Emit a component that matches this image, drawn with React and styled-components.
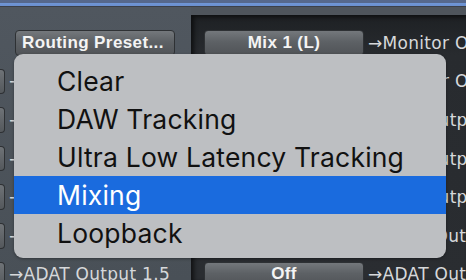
import React from "react";
import styled, { createGlobalStyle } from "styled-components";

const GlobalStyle = createGlobalStyle`
  html, body { margin: 0; padding: 0; background: #4c5259; }
  * { box-sizing: border-box; }
`;

const Screen = styled.div`
  position: relative;
  width: 466px;
  height: 280px;
  overflow: hidden;
  background: #4f555c;
  font-family: "Liberation Sans", Arial, sans-serif;
`;

const TopBar = styled.div`
  height: 7px;
  background: linear-gradient(#56688c 0, #56688c 3px, #7096d6 3px, #6a8fce 6px, #3c4048 6px);
`;

const Body = styled.div`
  display: flex;
  height: 273px;
`;

const LeftPanel = styled.div`
  width: 191px;
  flex-shrink: 0;
  overflow: hidden;
  padding-top: 23px;
  background: linear-gradient(#50575f, #495057);
`;

const RightPanel = styled.div`
  flex: 1;
  min-width: 0;
  overflow: hidden;
  margin-top: 8px;
  padding-top: 15px;
  background: linear-gradient(#1e2124, #282b2f 40px, #2a2d31);
  box-shadow: inset 3px 2px 4px rgba(0, 0, 0, 0.6);
`;

const Rows = styled.div`
  display: flex;
  flex-direction: column;
  gap: 13px;
`;

const Row = styled.div`
  display: flex;
  align-items: center;
  height: 25.6px;
  padding-left: ${(p) => p.$indent || 0}px;
  white-space: nowrap;
`;

const Button = styled.div`
  width: ${(p) => p.$w}px;
  height: 100%;
  flex-shrink: 0;
  display: flex;
  align-items: center;
  justify-content: ${(p) => (p.$left ? "flex-start" : "center")};
  padding-left: ${(p) => (p.$left ? 6 : 0)}px;
  border-radius: 4px;
  border: 1px solid #2e3134;
  background: linear-gradient(#74787c, #5d6165 45%, #505357);
  color: #f4f4f4;
  font-weight: bold;
  font-size: 17px;
  letter-spacing: 0.4px;
`;

const Stub = styled.div`
  width: 5px;
  height: 100%;
  flex-shrink: 0;
  border-radius: 0 4px 4px 0;
  border: 1px solid #2e3134;
  border-left: none;
  background: linear-gradient(#6f7377, #54585c);
`;

const Label = styled.span`
  margin-left: ${(p) => p.$gap || 4}px;
  color: #d6d8da;
  font-family: "DejaVu Sans", sans-serif;
  font-size: 17px;
  letter-spacing: 0.3px;
`;

const Menu = styled.div`
  position: absolute;
  left: 14px;
  top: 54px;
  width: 432px;
  padding: 8px 0 6px;
  border-radius: 9px;
  background: #bdbfc2;
  box-shadow: 0 1px 3px rgba(0, 0, 0, 0.35);
  overflow: hidden;
`;

const Item = styled.div`
  height: 38px;
  display: flex;
  align-items: center;
  padding-left: 43px;
  font-family: Inter, "Noto Sans", sans-serif;
  font-size: 26.5px;
  letter-spacing: 0.2px;
  color: ${(p) => (p.$active ? "#ffffff" : "#111111")};
  background: ${(p) => (p.$active ? "#1a6bde" : "transparent")};
`;

const leftRows = [
  null,
  "→Analog Output 1.2",
  "→Analog Output 3.4",
  "→Analog Output 5.6",
  "→ADAT Output 1.2",
  "→ADAT Output 3.4",
  "→ADAT Output 1.5",
];

const rightRows = [
  ["Mix 1 (L)", "→Monitor Output"],
  ["Mix 1 (R)", "→Monitor Output"],
  ["Off", "→Line Output 1"],
  ["Off", "→Line Output 2"],
  ["Off", "→Line Output 3"],
  ["Off", "→ADAT Output 1"],
  ["Off", "→ADAT Output 2"],
];

const items = ["Clear", "DAW Tracking", "Ultra Low Latency Tracking", "Mixing", "Loopback"];

export default function App() {
  return (
    <Screen>
      <GlobalStyle />
      <TopBar />
      <Body>
        <LeftPanel>
          <Rows>
            {leftRows.map((label, i) =>
              label === null ? (
                <Row key={i} $indent={15}>
                  <Button $w={160} $left>Routing Preset...</Button>
                </Row>
              ) : (
                <Row key={i}>
                  <Stub />
                  <Label $gap={4}>{label}</Label>
                </Row>
              )
            )}
          </Rows>
        </LeftPanel>
        <RightPanel>
          <Rows>
            {rightRows.map(([btn, label], i) => (
              <Row key={i} $indent={13}>
                <Button $w={160}>{btn}</Button>
                <Label $gap={4}>{label}</Label>
              </Row>
            ))}
          </Rows>
        </RightPanel>
      </Body>
      <Menu>
        {items.map((it) => (
          <Item key={it} $active={it === "Mixing"}>{it}</Item>
        ))}
      </Menu>
    </Screen>
  );
}
